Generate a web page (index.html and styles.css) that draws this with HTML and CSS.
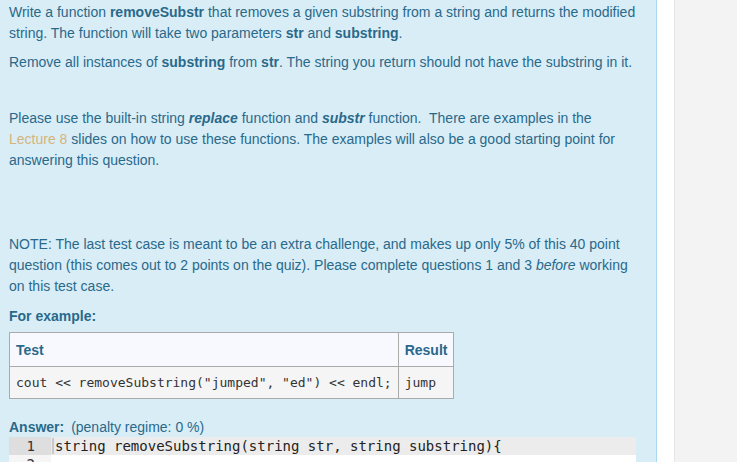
FILE: index.html
```html
<!DOCTYPE html>
<html>
<head>
<meta charset="utf-8">
<link rel="stylesheet" href="styles.css">
</head>
<body>
<div class="page">
  <div class="formulation">
    <div class="qtext">
      <p>Write a function <b>removeSubstr</b> that removes a given substring from a string and returns the modified string. The function will take two parameters <b>str</b> and <b>substring</b>.</p>
      <p>Remove all instances of <b>substring</b> from <b>str</b>. The string you return should not have the substring in it.</p>
      <p class="empty">&nbsp;</p>
      <p>Please use the built-in string <b><i>replace</i></b> function and <b><i>substr</i></b> function.&nbsp; There are examples in the <a class="link" href="#">Lecture 8</a> slides on how to use these functions. The examples will also be a good starting point for answering this question.</p>
      <p class="empty">&nbsp;</p>
      <p class="empty">&nbsp;</p>
      <p>NOTE: The last test case is meant to be an extra challenge, and makes up only 5% of this 40 point question (this comes out to 2 points on the quiz). Please complete questions 1 and 3 <i>before</i> working on this test case.</p>
      <h4 class="for-example">For example:</h4>
      <table class="examples">
        <thead>
          <tr><th>Test</th><th class="result">Result</th></tr>
        </thead>
        <tbody>
          <tr><td class="code">cout &lt;&lt; removeSubstring("jumped", "ed") &lt;&lt; endl;</td><td class="code">jump</td></tr>
        </tbody>
      </table>
    </div>
    <div class="answer-label"><b>Answer:</b> <span class="penalty">(penalty regime: 0 %)</span></div>
    <div class="editor">
      <div class="row active"><div class="gutter">1</div><div class="line"><span class="cursor"></span>string removeSubstring(string str, string substring){</div></div>
      <div class="row"><div class="gutter">2</div><div class="line"></div></div>
    </div>
  </div>
  <div class="spacer"></div>
  <div class="sidebar"></div>
</div>
</body>
</html>
```

FILE: styles.css
```css
html, body {
  margin: 0;
  padding: 0;
  height: 100%;
  background: #ffffff;
}
body {
  font-family: "Liberation Sans", Arial, sans-serif;
  font-size: 14px;
  overflow: hidden;
}
.page {
  display: flex;
  height: 462px;
}
.formulation {
  width: 647px;
  flex: none;
  background: #d9edf7;
  border-right: 1px solid #a9daf3;
  color: #29698a;
  padding: 2px 0 0 9px;
  overflow: hidden;
}
.qtext {
  width: 629px;
}
.qtext p {
  margin: 0 0 8px 0;
  line-height: 20.8px;
}
.qtext p.empty {
  margin-bottom: 7px;
}
.qtext b { font-weight: bold; }
.link {
  color: #d5b47a;
  text-decoration: none;
  white-space: nowrap;
}
.for-example {
  margin: 9px 0 6px 0;
  font-size: 14px;
  line-height: 20.8px;
  font-weight: bold;
}
.examples {
  border-collapse: collapse;
  border: 1px solid #aaaaaa;
  color: #29698a;
}
.examples th {
  background: #f8f8ff;
  text-align: left;
  font-weight: bold;
  height: 34px;
  padding: 0 6px;
  border: 1px solid #aaaaaa;
  box-sizing: border-box;
}
.examples th.result { text-align: right; }
.examples td {
  background: #f5f5f5;
  border: 1px solid #aaaaaa;
  height: 32px;
  padding: 0 6px;
  box-sizing: border-box;
}
.code {
  font-family: "DejaVu Sans Mono", monospace;
  font-size: 13px;
  color: #333333;
  white-space: pre;
}
.answer-label {
  margin-top: 18px;
  line-height: 20px;
}
.penalty { margin-left: 3px; }
.editor {
  width: 627px;
  background: #ffffff;
  font-family: "DejaVu Sans Mono", monospace;
  font-size: 14px;
  color: #222222;
}
.row {
  display: flex;
  height: 18px;
  line-height: 18px;
}
.gutter {
  width: 42px;
  flex: none;
  box-sizing: border-box;
  text-align: right;
  padding-right: 16px;
  background: #f6f6f6;
  color: #333;
}
.row.active .gutter { background: #dedede; }
.line {
  flex: 1;
  white-space: pre;
  position: relative;
  padding-left: 4px;
}
.row.active .line { background: #ececec; }
.cursor {
  position: absolute;
  left: 1px;
  top: 1px;
  width: 2px;
  height: 16px;
  background: #c8c8c8;
}
.spacer {
  width: 17px;
  flex: none;
}
.sidebar {
  flex: 1;
  background: #f3f3f3;
  border-left: 1px solid #e6e6e6;
}
```
